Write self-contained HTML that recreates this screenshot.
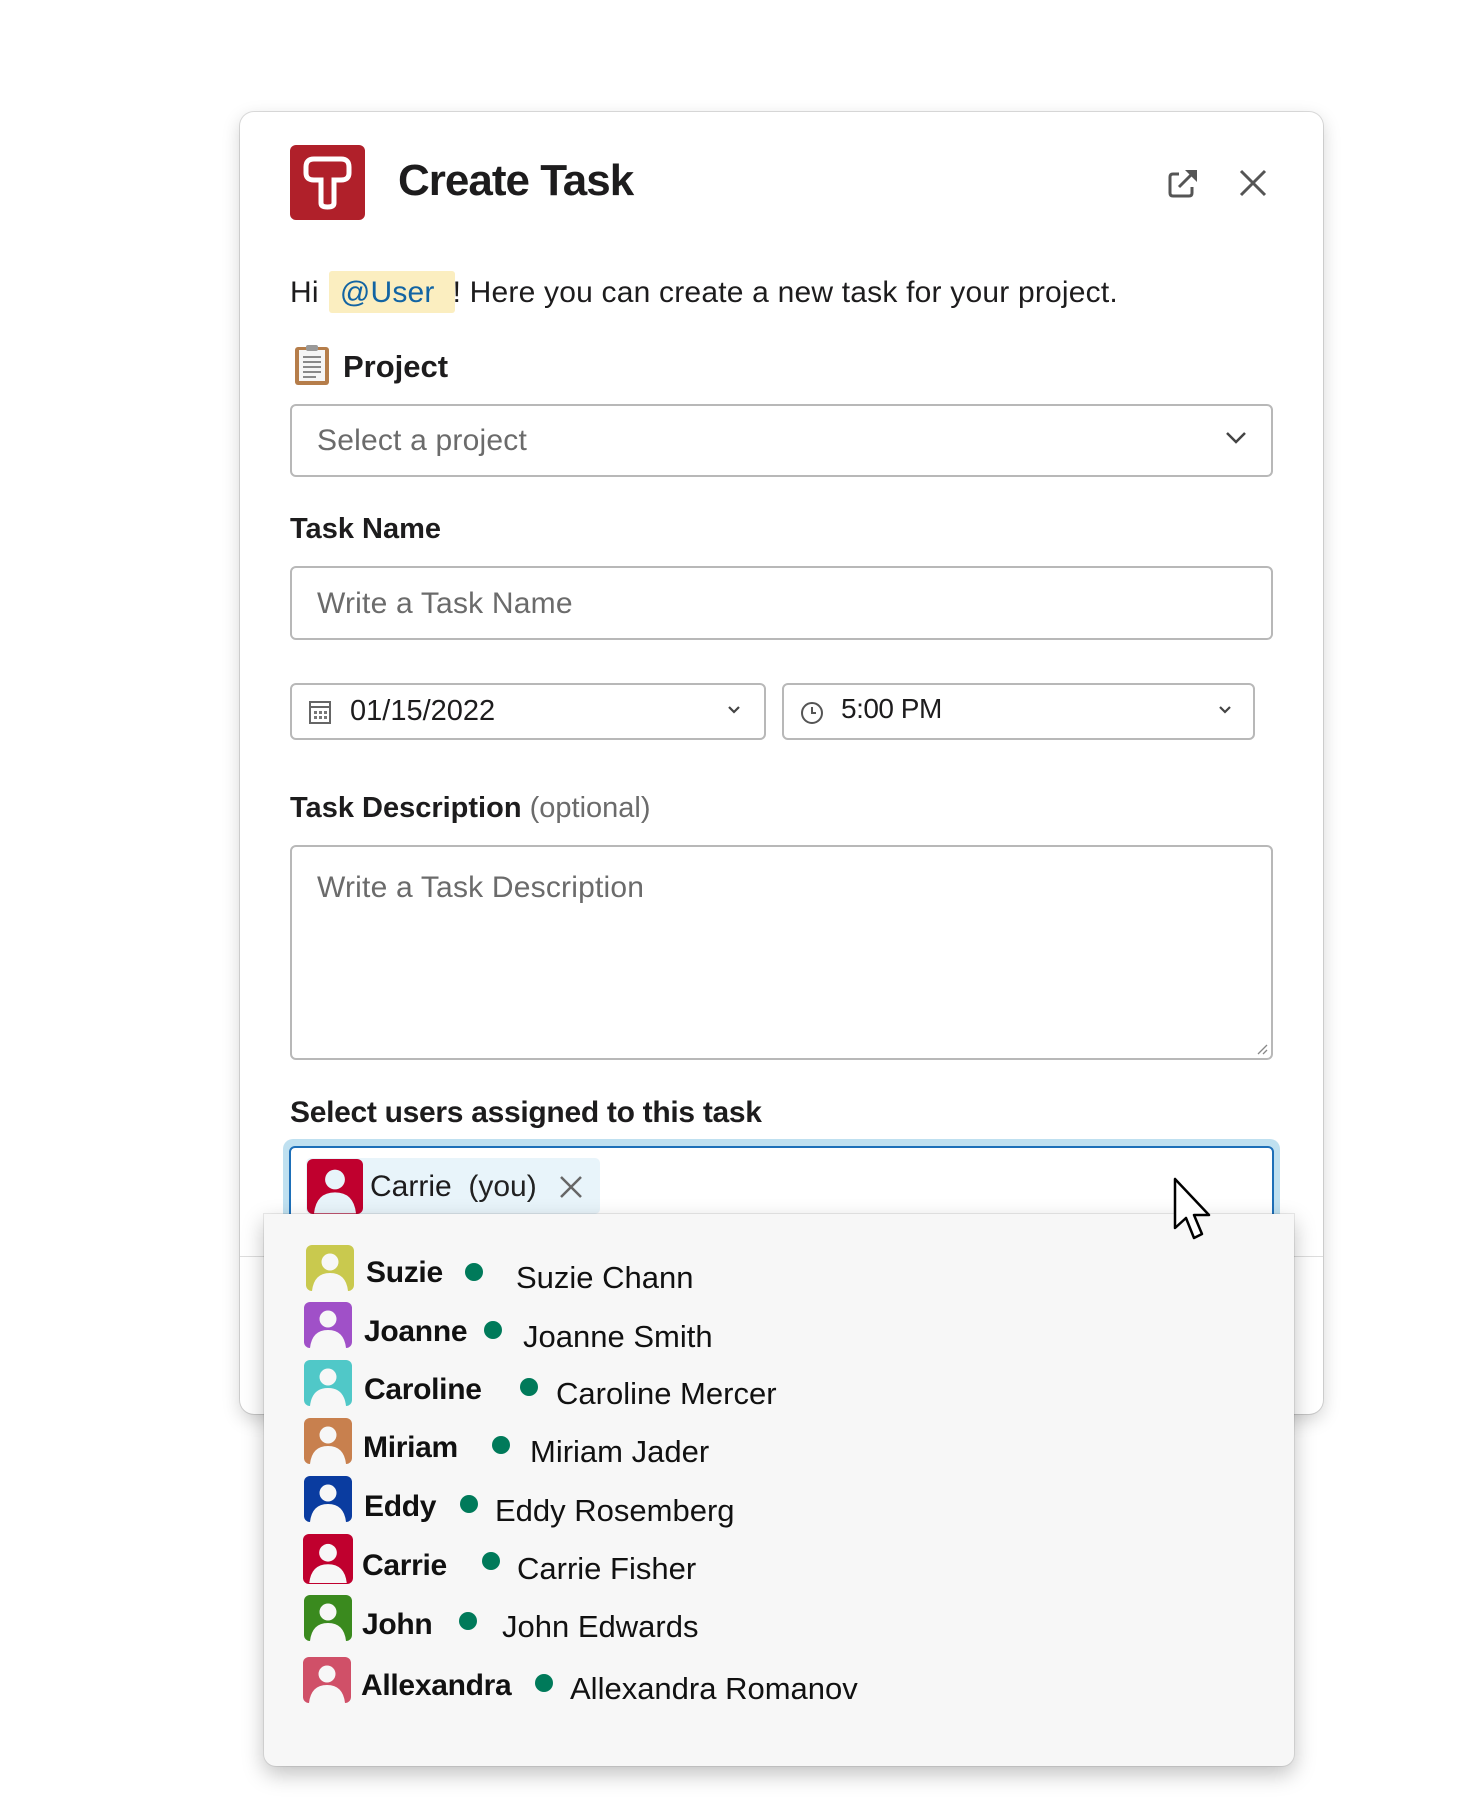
<!DOCTYPE html>
<html><head><meta charset="utf-8"><style>
*{box-sizing:border-box;margin:0;padding:0}
body{width:1480px;height:1816px;background:#fff;position:relative;overflow:hidden;font-family:"Liberation Sans",sans-serif;color:#1d1c1d}
.a{position:absolute;white-space:nowrap}
.modal{position:absolute;left:240px;top:112px;width:1083px;height:1302px;border-radius:14px;background:#fff;box-shadow:0 0 0 1px rgba(0,0,0,.12),0 6px 18px rgba(0,0,0,.18)}
.box{position:absolute;border:2px solid #b8b8b8;border-radius:6px;background:#fff}
.lbl{font-weight:bold;font-size:29px}
.ph{color:#6b6b6b;font-size:30px;letter-spacing:0.2px}
.dd{position:absolute;left:264px;top:1214px;width:1030px;height:552px;background:#f7f7f7;border-radius:0 0 12px 12px;box-shadow:0 8px 22px rgba(0,0,0,.25),0 0 0 1px rgba(0,0,0,.08)}
.av{position:absolute;width:48px;height:46px;border-radius:6px;overflow:hidden}
.av svg{display:block}
.nm{position:absolute;font-weight:bold;font-size:30px;letter-spacing:-0.3px;color:#111}
.fn{position:absolute;font-size:31px;color:#111}
.dot{position:absolute;width:18px;height:18px;border-radius:50%;background:#007a5a}
</style></head><body>
<div class="modal"></div>
<div class="a" style="left:290px;top:145px;width:75px;height:75px;background:#b0202a;border-radius:6px">
<svg width="75" height="75" viewBox="0 0 75 75"><path d="M16 22 Q16 14 24 14 L51 14 Q59 14 59 22 L59 28 Q59 35 51 35 L44 35 L44 58 Q44 62 37.5 62 Q31 62 31 58 L31 35 L24 35 Q16 35 16 28 Z" fill="none" stroke="#fff" stroke-width="5"/></svg></div>
<div class="a" style="left:398px;top:156px;font-size:44px;font-weight:bold;letter-spacing:-1px">Create Task</div>
<svg class="a" style="left:1166px;top:166px" width="34" height="34" viewBox="0 0 34 34"><path d="M13 8 H7 Q4 8 4 11 V27 Q4 30 7 30 H23 Q26 30 26 27 V21" fill="none" stroke="#555" stroke-width="3"/><path d="M13 21 L28 6" stroke="#555" stroke-width="3"/><path d="M19 4 H31 V16 Z" fill="#555"/></svg>
<svg class="a" style="left:1238px;top:168px" width="30" height="30" viewBox="0 0 30 30"><path d="M3 3 L27 27 M27 3 L3 27" stroke="#555" stroke-width="3"/></svg>
<div class="a" style="left:329px;top:271px;width:126px;height:42px;background:#fbeec0;border-radius:3px"></div>
<div class="a" style="left:290px;top:276px;font-size:30px;letter-spacing:0.2px">Hi&nbsp; <span style="color:#1264a3;margin-left:4px">@User</span><span style="margin-left:18px">! Here you can create a new task for your project.</span></div>
<svg class="a" style="left:294px;top:344px" width="36" height="42" viewBox="0 0 36 42"><rect x="1" y="3" width="34" height="38" rx="3" fill="#b57d4a"/><rect x="5" y="6" width="26" height="31" fill="#f5f5f5"/><rect x="12" y="1" width="12" height="6" rx="2" fill="#999"/><g stroke="#888" stroke-width="2"><path d="M9 13H27M9 18H27M9 23H27M9 28H27M9 33H22"/></g></svg>
<div class="a lbl" style="left:343px;top:349px;font-size:31px">Project</div>
<div class="box" style="left:290px;top:404px;width:983px;height:73px"></div>
<div class="a ph" style="left:317px;top:424px">Select a project</div>
<svg class="a" style="left:1224px;top:430px" width="24" height="16" viewBox="0 0 24 16"><path d="M3 3 L12 12 L21 3" fill="none" stroke="#444" stroke-width="2.5"/></svg>
<div class="a lbl" style="left:290px;top:513px">Task Name</div>
<div class="box" style="left:290px;top:566px;width:983px;height:74px"></div>
<div class="a ph" style="left:317px;top:587px">Write a Task Name</div>
<div class="box" style="left:290px;top:683px;width:476px;height:57px"></div>
<svg class="a" style="left:308px;top:699px" width="24" height="26" viewBox="0 0 24 26"><rect x="2" y="3" width="20" height="21" fill="none" stroke="#666" stroke-width="2"/><path d="M2 8H22" stroke="#666" stroke-width="2"/><g fill="#777"><rect x="6" y="12" width="3" height="3"/><rect x="11" y="12" width="3" height="3"/><rect x="16" y="12" width="3" height="3"/><rect x="6" y="17" width="3" height="3"/><rect x="11" y="17" width="3" height="3"/><rect x="16" y="17" width="3" height="3"/></g></svg>
<div class="a" style="left:350px;top:695px;font-size:29px">01/15/2022</div>
<svg class="a" style="left:727px;top:704px" width="14" height="12" viewBox="0 0 14 12"><path d="M2 3 L7 8 L12 3" fill="none" stroke="#444" stroke-width="2.2"/></svg>
<div class="box" style="left:782px;top:683px;width:473px;height:57px"></div>
<svg class="a" style="left:799px;top:700px" width="26" height="26" viewBox="0 0 26 26"><circle cx="13" cy="13" r="10" fill="none" stroke="#555" stroke-width="2"/><path d="M13 7 V13 H17" fill="none" stroke="#555" stroke-width="2"/></svg>
<div class="a" style="left:841px;top:693px;font-size:28px;letter-spacing:-0.5px">5:00 PM</div>
<svg class="a" style="left:1218px;top:704px" width="14" height="12" viewBox="0 0 14 12"><path d="M2 3 L7 8 L12 3" fill="none" stroke="#444" stroke-width="2.2"/></svg>
<div class="a lbl" style="left:290px;top:792px">Task Description <span style="font-weight:normal;color:#6b6b6b">(optional)</span></div>
<div class="box" style="left:290px;top:845px;width:983px;height:215px"></div>
<div class="a ph" style="left:317px;top:871px">Write a Task Description</div>
<svg class="a" style="left:1256px;top:1043px" width="12" height="12" viewBox="0 0 12 12"><path d="M2 11 L11 2 M7 11 L11 7" stroke="#888" stroke-width="1.3"/></svg>
<div class="a lbl" style="left:290px;top:1096px;font-size:30px;letter-spacing:-0.3px">Select users assigned to this task</div>
<div class="a" style="left:283px;top:1139px;width:997px;height:120px;border-radius:10px;background:#bfe0f0"></div>
<div class="a" style="left:289px;top:1146px;width:985px;height:120px;border:2px solid #1d6fb8;border-radius:6px;background:#fff"></div>
<div class="a" style="left:306px;top:1158px;width:294px;height:56px;background:#e8f4fa;border-radius:5px"></div>
<div class="av" style="left:307px;top:1159px;width:56px;height:55px;background:#c0002e"><svg width="56" height="55" viewBox="0 0 48 46"><circle cx="24" cy="17" r="8.5" fill="#e8f4fa"/><path d="M6 46 Q8 28 24 28 Q40 28 42 46 Z" fill="#e8f4fa"/></svg></div>
<div class="a" style="left:370px;top:1170px;font-size:30px">Carrie&nbsp; <span style="color:#222">(you)</span></div>
<svg class="a" style="left:558px;top:1174px" width="26" height="26" viewBox="0 0 26 26"><path d="M3 3 L23 23 M23 3 L3 23" stroke="#666" stroke-width="2.5"/></svg>
<div class="a" style="left:240px;top:1256px;width:1083px;height:1px;background:#ddd"></div>
<div class="dd"></div>
<svg class="a" style="left:1172px;top:1176px" width="44" height="70" viewBox="0 0 44 70"><path d="M3 3 L3 52 L14 42 L22 62 L30 58 L22 39 L37 39 Z" fill="#fff" stroke="#000" stroke-width="2.5" stroke-linejoin="round"/></svg>

<div class="av" style="left:306px;top:1245px;background:#c9c94e"><svg width="48" height="46" viewBox="0 0 48 46"><circle cx="24" cy="17" r="8.5" fill="#f7f7f7"/><path d="M6 46 Q8 28 24 28 Q40 28 42 46 Z" fill="#f7f7f7"/></svg></div>
<div class="nm" style="left:366px;top:1256px">Suzie</div><div class="dot" style="left:465px;top:1263px"></div><div class="fn" style="left:516px;top:1260px">Suzie Chann</div>

<div class="av" style="left:304px;top:1302px;background:#a050c8"><svg width="48" height="46" viewBox="0 0 48 46"><circle cx="24" cy="17" r="8.5" fill="#f7f7f7"/><path d="M6 46 Q8 28 24 28 Q40 28 42 46 Z" fill="#f7f7f7"/></svg></div>
<div class="nm" style="left:364px;top:1315px">Joanne</div><div class="dot" style="left:484px;top:1321px"></div><div class="fn" style="left:523px;top:1319px">Joanne Smith</div>

<div class="av" style="left:304px;top:1360px;background:#50c8c8"><svg width="48" height="46" viewBox="0 0 48 46"><circle cx="24" cy="17" r="8.5" fill="#f7f7f7"/><path d="M6 46 Q8 28 24 28 Q40 28 42 46 Z" fill="#f7f7f7"/></svg></div>
<div class="nm" style="left:364px;top:1373px">Caroline</div><div class="dot" style="left:520px;top:1378px"></div><div class="fn" style="left:556px;top:1376px">Caroline Mercer</div>

<div class="av" style="left:304px;top:1418px;background:#c8804e"><svg width="48" height="46" viewBox="0 0 48 46"><circle cx="24" cy="17" r="8.5" fill="#f7f7f7"/><path d="M6 46 Q8 28 24 28 Q40 28 42 46 Z" fill="#f7f7f7"/></svg></div>
<div class="nm" style="left:363px;top:1431px">Miriam</div><div class="dot" style="left:492px;top:1436px"></div><div class="fn" style="left:530px;top:1434px">Miriam Jader</div>

<div class="av" style="left:304px;top:1476px;background:#0a3ca0"><svg width="48" height="46" viewBox="0 0 48 46"><circle cx="24" cy="17" r="8.5" fill="#f7f7f7"/><path d="M6 46 Q8 28 24 28 Q40 28 42 46 Z" fill="#f7f7f7"/></svg></div>
<div class="nm" style="left:364px;top:1490px">Eddy</div><div class="dot" style="left:460px;top:1495px"></div><div class="fn" style="left:495px;top:1493px">Eddy Rosemberg</div>

<div class="av" style="left:303px;top:1534px;width:50px;height:50px;background:#c0002e"><svg width="50" height="50" viewBox="0 0 48 46"><circle cx="24" cy="17" r="8.5" fill="#f7f7f7"/><path d="M6 46 Q8 28 24 28 Q40 28 42 46 Z" fill="#f7f7f7"/></svg></div>
<div class="nm" style="left:362px;top:1549px">Carrie</div><div class="dot" style="left:482px;top:1552px"></div><div class="fn" style="left:517px;top:1551px">Carrie Fisher</div>

<div class="av" style="left:304px;top:1595px;background:#3a8a1e"><svg width="48" height="46" viewBox="0 0 48 46"><circle cx="24" cy="17" r="8.5" fill="#f7f7f7"/><path d="M6 46 Q8 28 24 28 Q40 28 42 46 Z" fill="#f7f7f7"/></svg></div>
<div class="nm" style="left:362px;top:1608px">John</div><div class="dot" style="left:459px;top:1612px"></div><div class="fn" style="left:502px;top:1609px">John Edwards</div>

<div class="av" style="left:303px;top:1657px;background:#d05068"><svg width="48" height="46" viewBox="0 0 48 46"><circle cx="24" cy="17" r="8.5" fill="#f7f7f7"/><path d="M6 46 Q8 28 24 28 Q40 28 42 46 Z" fill="#f7f7f7"/></svg></div>
<div class="nm" style="left:361px;top:1669px">Allexandra</div><div class="dot" style="left:535px;top:1674px"></div><div class="fn" style="left:570px;top:1671px">Allexandra Romanov</div>
</body></html>
